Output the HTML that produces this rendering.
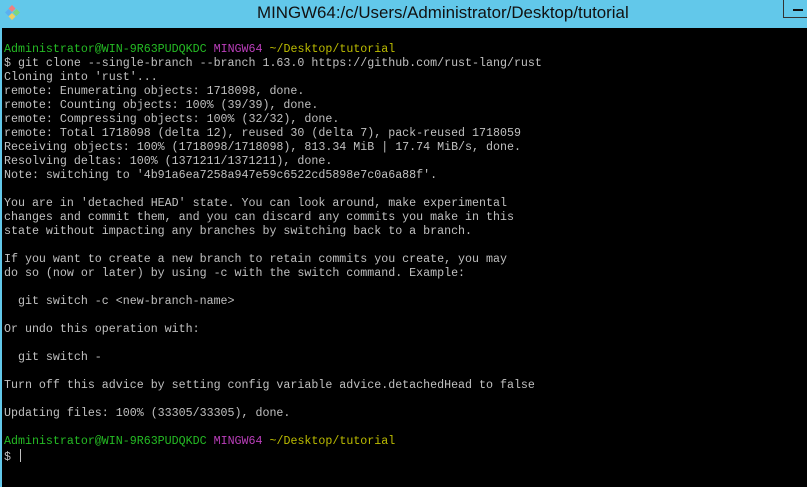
<!DOCTYPE html>
<html><head><style>
html,body{margin:0;padding:0;width:807px;height:487px;overflow:hidden;background:#62c8ea;}
.title{position:absolute;left:0;top:0;width:807px;height:27px;background:#62c8ea;}
.title .t{position:absolute;left:257px;top:3px;font:16.9px "Liberation Sans",sans-serif;color:#111;}
.min{position:absolute;left:783px;top:-1px;width:30px;height:19px;border:1px solid #333;box-sizing:border-box;}
.min i{position:absolute;left:9px;top:9px;width:10px;height:2px;background:#111;}
.term{position:absolute;left:2px;top:28px;width:805px;height:459px;background:#000;}
pre{position:absolute;left:2px;top:15px;margin:0;font:11.65px/14px "Liberation Mono",monospace;color:#c0c0c0;}
.g{color:#25bc24}.m{color:#bc3fbc}.y{color:#bcbc00}
.cur{display:inline-block;width:1px;height:13px;background:#c0c0c0;vertical-align:-2px;margin-left:2px}
</style></head><body>
<div class="title">
<svg style="position:absolute;left:5px;top:5px" width="15" height="15" viewBox="0 0 15 15">
<rect x="4.5" y="1" width="5" height="5" transform="rotate(45 7 3.5)" fill="#f08080"/>
<rect x="1" y="5" width="5" height="5" transform="rotate(45 3.5 7.5)" fill="#5ab0f0"/>
<rect x="9" y="5" width="5" height="5" transform="rotate(45 11.5 7.5)" fill="#7dd87d"/>
<rect x="4.5" y="9" width="5" height="5" transform="rotate(45 7 11.5)" fill="#f0d060"/>
</svg>
<div class="t">MINGW64:/c/Users/Administrator/Desktop/tutorial</div>
<div class="min"><i></i></div>
</div>
<div class="term"><pre><span class="g">Administrator@WIN-9R63PUDQKDC</span> <span class="m">MINGW64</span> <span class="y">~/Desktop/tutorial</span>
$ git clone --single-branch --branch 1.63.0 https://github.com/rust-lang/rust
Cloning into 'rust'...
remote: Enumerating objects: 1718098, done.
remote: Counting objects: 100% (39/39), done.
remote: Compressing objects: 100% (32/32), done.
remote: Total 1718098 (delta 12), reused 30 (delta 7), pack-reused 1718059
Receiving objects: 100% (1718098/1718098), 813.34 MiB | 17.74 MiB/s, done.
Resolving deltas: 100% (1371211/1371211), done.
Note: switching to '4b91a6ea7258a947e59c6522cd5898e7c0a6a88f'.

You are in 'detached HEAD' state. You can look around, make experimental
changes and commit them, and you can discard any commits you make in this
state without impacting any branches by switching back to a branch.

If you want to create a new branch to retain commits you create, you may
do so (now or later) by using -c with the switch command. Example:

  git switch -c &lt;new-branch-name&gt;

Or undo this operation with:

  git switch -

Turn off this advice by setting config variable advice.detachedHead to false

Updating files: 100% (33305/33305), done.

<span class="g">Administrator@WIN-9R63PUDQKDC</span> <span class="m">MINGW64</span> <span class="y">~/Desktop/tutorial</span>
$ <span class="cur"></span></pre></div>
</body></html>
